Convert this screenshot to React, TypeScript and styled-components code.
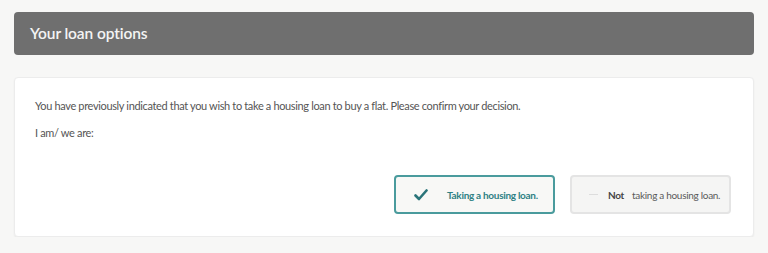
import { createGlobalStyle } from "styled-components";
import styled from "styled-components";

const Global = createGlobalStyle`
  html, body {
    margin: 0;
    padding: 0;
    background: #f7f7f6;
    font-family: Lato, "Open Sans", sans-serif;
  }
`;

const Page = styled.div`
  padding: 12px 14px 0 14px;
  display: flex;
  flex-direction: column;
  gap: 22px;
`;

const Header = styled.div`
  height: 43px;
  box-sizing: border-box;
  background: #6f6f6f;
  border-radius: 4px;
  display: flex;
  align-items: center;
  padding: 0 16px 1px 16px;
  color: #f4f4f4;
  font-size: 15.5px;
  font-weight: 600;
  letter-spacing: -0.1px;
`;

const Card = styled.div`
  background: #fff;
  border: 1px solid #ececec;
  border-radius: 4px;
  box-shadow: 0 1px 2px rgba(0, 0, 0, 0.05);
  padding: 21px 22px 21px 20px;
  height: 116px;
`;

const Text = styled.p`
  margin: 0 0 14px 0;
  font-size: 11px;
  letter-spacing: -0.35px;
  color: #555;
  line-height: 13px;
`;

const Options = styled.div`
  display: flex;
  justify-content: flex-end;
  gap: 15px;
  margin-top: 36px;
`;

const Option = styled.button<{ $active?: boolean }>`
  width: 161px;
  height: 39px;
  box-sizing: border-box;
  border-radius: 4px;
  border: 2px solid ${(p) => (p.$active ? "#4a9b9d" : "#e4e4e4")};
  background: ${(p) => (p.$active ? "#f8f8f6" : "#f5f5f4")};
  display: flex;
  align-items: center;
  padding: 0 0 0 17px;
  white-space: nowrap;
  font-family: inherit;
  font-size: 10px;
  letter-spacing: -0.3px;
  color: ${(p) => (p.$active ? "#2f8184" : "#5a5a5a")};
  font-weight: ${(p) => (p.$active ? 700 : 400)};
  cursor: pointer;
`;

const Mark = styled.span`
  width: 16px;
  display: flex;
  justify-content: center;
  margin-right: 18px;
`;

const Dash = styled.span`
  width: 9px;
  height: 1px;
  background: #ddd;
  margin: 0 10px 0 0;
`;

const Bold = styled.b`
  font-weight: 700;
  color: #444;
  margin-right: 8px;
`;

function Check() {
  return (
    <svg width="14" height="12" viewBox="0 0 14 12">
      <path d="M1.5 6.5 L5 10 L12.5 1.5" fill="none" stroke="#2a7479" strokeWidth="2.6" strokeLinecap="round" strokeLinejoin="round" />
    </svg>
  );
}

export default function App() {
  return (
    <>
      <Global />
      <Page>
        <Header>Your loan options</Header>
        <Card>
          <Text>You have previously indicated that you wish to take a housing loan to buy a flat. Please confirm your decision.</Text>
          <Text>I am/ we are:</Text>
          <Options>
            <Option $active>
              <Mark>
                <Check />
              </Mark>
              Taking a housing loan.
            </Option>
            <Option>
              <Dash />
              <Bold>Not</Bold>
              taking a housing loan.
            </Option>
          </Options>
        </Card>
      </Page>
    </>
  );
}
